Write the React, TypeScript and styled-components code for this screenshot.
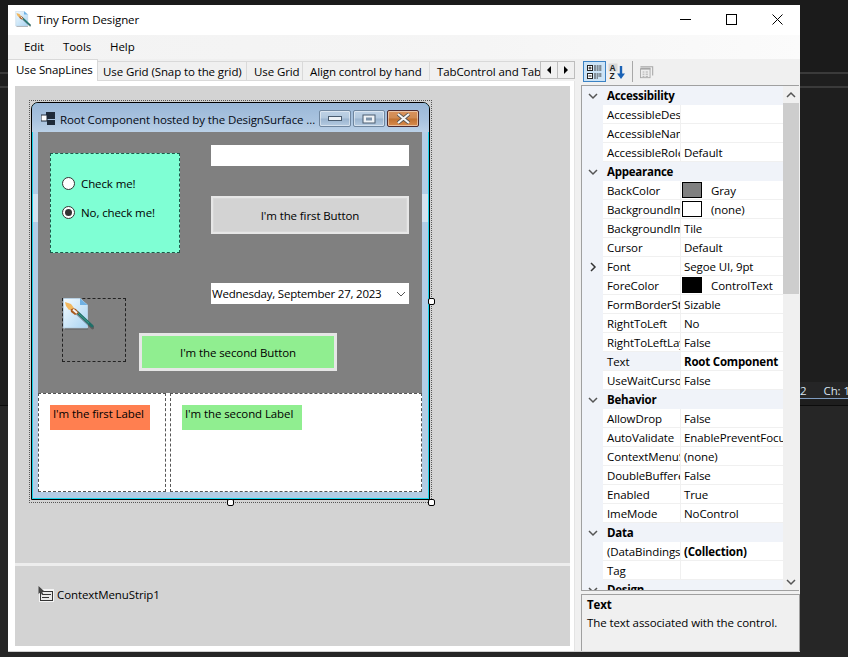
import React from "react";
import styled, { createGlobalStyle } from "styled-components";

const GlobalStyle = createGlobalStyle`
  html, body {
    margin: 0;
    padding: 0;
    background: #1e1e1e;
  }
  * {
    box-sizing: border-box;
  }
`;

const FONT = `"Open Sans", "Noto Sans", "Liberation Sans", sans-serif`;

const Shell = styled.div`
  position: relative;
  width: 848px;
  height: 657px;
  overflow: hidden;
  padding: 5px 0 0 8px;
  background: #1e1e1e;
  font-family: ${FONT};
  font-size: 11.5px;
  letter-spacing: -0.1px;
  color: #000;
`;

/* the editor behind the window, only its edges are visible */
const Backdrop = styled.div`
  position: absolute;
  inset: 0;
  display: flex;
  flex-direction: column;
`;

const BackdropTop = styled.div`
  height: 72px;
  background: #1b1b1b;
`;

const EditorLine = styled.div`
  height: 14px;
  border-top: 2px solid #3a3a3a;
`;

const EditorBody = styled.div`
  height: 296px;
  border-top: 2px solid #3a3a3a;
  background: #1e1e1e;
`;

const StatusRow = styled.div`
  height: 17px;
  margin-left: 800px;
  display: flex;
  gap: 17px;
  align-items: center;
  background: #252526;
  border-bottom: 1px solid #7f9cc0;
  color: #d7e3f0;
  white-space: nowrap;
`;

const EditorRest = styled.div`
  flex: 1;
  margin-top: 6px;
  background: #262626;
  border-top: 1px solid #0c0c0c;
`;

const Window = styled.div`
  position: relative;
  width: 792px;
  height: 647px;
  display: flex;
  flex-direction: column;
  background: #fff;
  border-bottom: 1px solid #d0d0d0;
`;

const TitleBar = styled.div`
  height: 30px;
  flex: none;
  display: flex;
  align-items: center;
  padding: 0 0 2px 7px;
  background: #fff;
`;

const TitleText = styled.span`
  margin-left: 6px;
  flex: 1;
`;

const WindowControls = styled.div`
  display: flex;
  align-items: center;
  margin-right: 17px;
  gap: 35px;
`;

const MenuBar = styled.div`
  height: 24px;
  flex: none;
  display: flex;
  align-items: center;
  gap: 19px;
  padding: 0 0 2px 16px;
  background: linear-gradient(90deg, #f3f3f3 0%, #f5f5f5 60%, #fbfbfb 100%);
`;

const Workspace = styled.div`
  flex: 1;
  min-height: 0;
  display: flex;
`;

const LeftPane = styled.div`
  width: 567px;
  flex: none;
  display: flex;
  flex-direction: column;
`;

const TabStrip = styled.div`
  height: 22px;
  flex: none;
  display: flex;
  background: #f0f0f0;
`;

const TabList = styled.div`
  width: 532px;
  flex: none;
  display: flex;
  align-items: flex-end;
  overflow: hidden;
`;

const Tab = styled.div<{ $w: number; $pad: number; $active?: boolean }>`
  width: ${(p) => p.$w}px;
  flex: none;
  height: ${(p) => (p.$active ? 22 : 20)}px;
  display: flex;
  align-items: center;
  padding-left: ${(p) => p.$pad}px;
  padding-bottom: ${(p) => (p.$active ? 3 : 0)}px;
  white-space: nowrap;
  overflow: hidden;
  background: ${(p) => (p.$active ? "#fff" : "#f0f0f0")};
  border: 1px solid #d9d9d9;
  border-left: none;
  border-bottom: ${(p) => (p.$active ? "none" : "1px solid #d9d9d9")};
`;

const TabScroller = styled.div`
  display: flex;
  height: 18px;
  margin-top: 2px;
`;

const TabScrollButton = styled.div`
  width: 18px;
  height: 18px;
  display: flex;
  align-items: center;
  justify-content: center;
  background: #f0f0f0;
  border: 1px solid #bdbdbd;
  margin-left: -1px;
  &:first-child {
    margin-left: 0;
  }
`;

const TabPage = styled.div`
  flex: 1;
  min-height: 0;
  display: flex;
  flex-direction: column;
  padding: 5px 4px 5px 7px;
  background: #fff;
  border-right: 1px solid #e4e4e4;
`;

const DesignCanvas = styled.div`
  height: 477px;
  flex: none;
  padding: 14px 0 0 14px;
  background: #d3d3d3;
`;

const TrayDivider = styled.div`
  height: 3px;
  flex: none;
  background: #ededed;
`;

const ComponentTray = styled.div`
  flex: 1;
  display: flex;
  align-items: flex-start;
  padding: 20px 0 0 23px;
  background: #d3d3d3;
`;

const TrayLabel = styled.span`
  margin: 1px 0 0 3px;
`;

const SelectionFrame = styled.div`
  position: relative;
  width: 403px;
  height: 403px;
  padding: 1px;
  border: 1px dotted #555;
`;

const Handle = styled.div<{ $x: number; $y: number }>`
  position: absolute;
  left: ${(p) => p.$x}px;
  top: ${(p) => p.$y}px;
  width: 7px;
  height: 7px;
  background: #fff;
  border: 1px solid #000;
  border-radius: 2px;
`;

const FormWindow = styled.div`
  width: 399px;
  height: 398px;
  display: flex;
  flex-direction: column;
  padding: 0 6px 7px 5px;
  border: 1px solid #000;
  border-radius: 7px 7px 0 0;
  box-shadow: inset 1px 0 0 #19d3ea, inset -1px 0 0 #19d3ea, inset 0 -1px 0 #19d3ea;
  background: linear-gradient(
    180deg,
    #b3cde6 0,
    #b3cde6 91px,
    #d4e3f1 91px,
    #d4e3f1 119px,
    #b3cde6 119px
  );
`;

const FormTitleBar = styled.div`
  height: 29px;
  flex: none;
  margin: 0 -6px 0 -5px;
  padding: 2px 10px 0 9px;
  display: flex;
  align-items: center;
  border-radius: 6px 6px 0 0;
  background: linear-gradient(180deg, #9ab7d7 0%, #a9c3df 60%, #bbd1e8 100%);
`;

const FormTitle = styled.span`
  margin-left: 5px;
  padding-top: 2px;
  flex: 1;
  white-space: nowrap;
  color: #050a14;
`;

const FormButtons = styled.div`
  display: flex;
  gap: 2px;
`;

const CaptionButton = styled.div<{ $close?: boolean }>`
  width: 32px;
  height: 17px;
  display: flex;
  align-items: center;
  justify-content: center;
  border: 1px solid ${(p) => (p.$close ? "#4c2a30" : "#6f869f")};
  border-radius: 2px;
  background: ${(p) =>
    p.$close
      ? "linear-gradient(180deg,#d9925c 0%,#d08a52 48%,#c06f2f 52%,#d98c4e 100%)"
      : "linear-gradient(180deg,#bfd2e6 0%,#b2c8de 48%,#9ab4cf 52%,#b5cbe1 100%)"};
  box-shadow: inset 0 0 0 1px rgba(255, 255, 255, 0.45);
`;

const FormClient = styled.div`
  flex: 1;
  min-height: 0;
  margin: 0 1px;
  display: flex;
  flex-direction: column;
`;

/* designer surface: controls sit at their own coordinates here */
const GraySurface = styled.div`
  position: relative;
  height: 261px;
  flex: none;
  background: #808080;
`;

const RadioPanel = styled.div`
  position: absolute;
  left: 12px;
  top: 21px;
  width: 130px;
  height: 100px;
  display: flex;
  flex-direction: column;
  gap: 10px;
  padding: 20px 0 0 11px;
  background: #7fffd4;
  border: 1px dashed #1c5a4a;
`;

const RadioRow = styled.div`
  display: flex;
  align-items: center;
  gap: 6px;
  height: 19px;
`;

const RadioCircle = styled.span<{ $checked?: boolean }>`
  width: 13px;
  height: 13px;
  flex: none;
  display: flex;
  align-items: center;
  justify-content: center;
  border-radius: 50%;
  border: 1px solid #333;
  background: #fff;
  &::after {
    content: "";
    display: ${(p) => (p.$checked ? "block" : "none")};
    width: 7px;
    height: 7px;
    border-radius: 50%;
    background: #333;
  }
`;

const NameInput = styled.div`
  position: absolute;
  left: 173px;
  top: 13px;
  width: 198px;
  height: 21px;
  background: #fff;
`;

const DesignButton = styled.div<{ $x: number; $y: number; $bg: string; $edge: string }>`
  position: absolute;
  left: ${(p) => p.$x}px;
  top: ${(p) => p.$y}px;
  width: 198px;
  height: 38px;
  display: flex;
  align-items: center;
  justify-content: center;
  background: ${(p) => p.$bg};
  border: 3px solid #e6e6e6;
  outline: 1px solid ${(p) => p.$edge};
  outline-offset: -3px;
`;

const DatePicker = styled.div`
  position: absolute;
  left: 173px;
  top: 151px;
  width: 198px;
  height: 21px;
  display: flex;
  align-items: center;
  justify-content: space-between;
  padding: 0 3px 0 1px;
  background: #fff;
  letter-spacing: -0.22px;
  white-space: nowrap;
`;

const PictureBox = styled.div`
  position: absolute;
  left: 24px;
  top: 166px;
  width: 64px;
  height: 64px;
  border: 1px dashed #222;
  & > svg {
    margin: -1px;
  }
`;

const BottomPanels = styled.div`
  flex: 1;
  display: flex;
  gap: 4px;
  background: #fff;
`;

const DockPanel = styled.div<{ $w: number; $indent: number }>`
  width: ${(p) => p.$w}px;
  flex: none;
  padding: 11px 0 0 ${(p) => p.$indent}px;
  background: #fff;
  border: 1px dashed #555;
`;

const DesignLabel = styled.div<{ $w: number; $bg: string }>`
  width: ${(p) => p.$w}px;
  height: 25px;
  padding-left: 3px;
  background: ${(p) => p.$bg};
  line-height: 17px;
  white-space: nowrap;
`;

const RightPane = styled.div`
  flex: 1;
  min-width: 0;
  display: flex;
  flex-direction: column;
  padding-left: 6px;
  background: #f0f0f0;
`;

const GridToolbar = styled.div`
  height: 26px;
  flex: none;
  display: flex;
  align-items: flex-start;
  padding: 2px 0 0 2px;
`;

const ToolButton = styled.div<{ $pressed?: boolean; $w: number }>`
  width: ${(p) => p.$w}px;
  height: 21px;
  display: flex;
  align-items: center;
  justify-content: center;
  background: ${(p) => (p.$pressed ? "#cce4f7" : "transparent")};
  border: 1px solid ${(p) => (p.$pressed ? "#3b82c4" : "transparent")};
`;

const ToolSeparator = styled.div`
  width: 1px;
  height: 21px;
  margin: 0 6px 0 4px;
  background: #a8a8a8;
`;

const Grid = styled.div`
  height: 506px;
  flex: none;
  display: flex;
  margin-right: 1px;
  background: #fff;
  border: 1px solid #a0a0a0;
`;

const GridList = styled.div`
  width: 201px;
  flex: none;
  overflow: hidden;
`;

const CategoryRow = styled.div`
  height: 19px;
  display: grid;
  grid-template-columns: 21px 1fr;
  align-items: center;
  background: #f0f3f9;
`;

const CategoryTitle = styled.span`
  padding-left: 4px;
  font-weight: 700;
  letter-spacing: -0.25px;
`;

const GridMargin = styled.div`
  display: flex;
  align-items: center;
  justify-content: center;
  height: 100%;
`;

const PropertyRow = styled.div`
  height: 19px;
  display: grid;
  grid-template-columns: 21px 77px 1fr;
  background: #fff;
`;

const RowMargin = styled(GridMargin)`
  background: #f0f3f9;
`;

const PropertyName = styled.div<{ $selected?: boolean }>`
  display: flex;
  align-items: center;
  height: 19px;
  overflow: hidden;
  white-space: nowrap;
  padding-left: 4px;
  border-bottom: 1px solid #f0f0f0;
  background: ${(p) => (p.$selected ? "#f0f3f9" : "#fff")};
`;

const PropertyValue = styled.div<{ $bold?: boolean }>`
  display: flex;
  align-items: center;
  overflow: hidden;
  white-space: nowrap;
  height: 19px;
  padding-left: 3px;
  font-weight: ${(p) => (p.$bold ? 700 : 400)};
  letter-spacing: ${(p) => (p.$bold ? "-0.2px" : "-0.1px")};
  border-left: 1px solid #f0f0f0;
  border-bottom: 1px solid #f0f0f0;
`;

const Swatch = styled.span<{ $color: string }>`
  width: 20px;
  height: 16px;
  flex: none;
  margin: 0 9px 0 -2px;
  background: ${(p) => p.$color};
  border: 1px solid #000;
`;

const ScrollBar = styled.div`
  width: 16px;
  flex: none;
  display: flex;
  flex-direction: column;
  background: #f0f0f0;
`;

const ScrollArrow = styled.div`
  height: 17px;
  flex: none;
  display: flex;
  align-items: center;
  justify-content: center;
`;

const ScrollThumb = styled.div`
  height: 191px;
  flex: none;
  background: #cdcdcd;
`;

const ScrollTrack = styled.div`
  flex: 1;
`;

const HelpPanel = styled.div`
  height: 57px;
  flex: none;
  margin-top: 3px;
  padding: 1px 0 0 5px;
  background: #f0f0f0;
  border: 1px solid #a0a0a0;
  border-bottom: none;
  line-height: 18px;
`;

const HelpTitle = styled.div`
  font-weight: 700;
`;

type PropertyItem = {
  name: string;
  value?: string;
  swatch?: string;
  bold?: boolean;
  expandable?: boolean;
  selected?: boolean;
};

type PropertyGroup = {
  title: string;
  items: PropertyItem[];
};

const groups: PropertyGroup[] = [
  {
    title: "Accessibility",
    items: [
      { name: "AccessibleDescription" },
      { name: "AccessibleName" },
      { name: "AccessibleRole", value: "Default" },
    ],
  },
  {
    title: "Appearance",
    items: [
      { name: "BackColor", value: "Gray", swatch: "#808080" },
      { name: "BackgroundImage", value: "(none)", swatch: "#fff" },
      { name: "BackgroundImageLayout", value: "Tile" },
      { name: "Cursor", value: "Default" },
      { name: "Font", value: "Segoe UI, 9pt", expandable: true },
      { name: "ForeColor", value: "ControlText", swatch: "#000" },
      { name: "FormBorderStyle", value: "Sizable" },
      { name: "RightToLeft", value: "No" },
      { name: "RightToLeftLayout", value: "False" },
      { name: "Text", value: "Root Component", bold: true, selected: true },
      { name: "UseWaitCursor", value: "False" },
    ],
  },
  {
    title: "Behavior",
    items: [
      { name: "AllowDrop", value: "False" },
      { name: "AutoValidate", value: "EnablePreventFocusChange" },
      { name: "ContextMenuStrip", value: "(none)" },
      { name: "DoubleBuffered", value: "False" },
      { name: "Enabled", value: "True" },
      { name: "ImeMode", value: "NoControl" },
    ],
  },
  {
    title: "Data",
    items: [
      { name: "(DataBindings)", value: "(Collection)", bold: true },
      { name: "Tag" },
    ],
  },
  { title: "Design", items: [] },
];

const BrushIcon = ({ size }: { size: number }) => (
  <svg width={size} height={size} viewBox="0 0 32 32" style={{ flex: "none", display: "block" }}>
    <defs>
      <linearGradient id="pageFill" x1="0" y1="0" x2="1" y2="1">
        <stop offset="0" stopColor="#f4fbff" />
        <stop offset="1" stopColor="#a9d4f2" />
      </linearGradient>
    </defs>
    <path d="M1.5 0.5H18L25.5 7V30H1.5Z" fill="url(#pageFill)" stroke="#b7cfe2" strokeWidth="1" />
    <path d="M18 0.5V7H25.5Z" fill="#6fb1e4" />
    <path d="M3 31H26" stroke="#555" strokeOpacity="0.5" strokeWidth="1.5" />
    <path d="M16 16L30.5 29.5" stroke="#333" strokeOpacity="0.45" strokeWidth="3.6" strokeLinecap="round" />
    <path d="M15 14L30 28" stroke="#1f6f68" strokeWidth="3" strokeLinecap="round" />
    <path d="M16 15L27 25.2" stroke="#3fa08c" strokeWidth="1" />
    <path d="M8 9L14 11L17 15L13 17L9 14Z" fill="#a9591c" />
    <path d="M3 4L9 6L12 10L7 12L4 8Z" fill="#f2b75e" />
    <path d="M11 11.5L15 15" stroke="#f4f4f4" strokeWidth="2" />
  </svg>
);

const Chevron = ({ dir, color = "#555", weight = 1.5 }: { dir: "down" | "right" | "up"; color?: string; weight?: number }) => {
  const d = dir === "down" ? "M1 3L5 7L9 3" : dir === "up" ? "M1 7L5 3L9 7" : "M3 1L7 5L3 9";
  return (
    <svg width="10" height="10" viewBox="0 0 10 10">
      <path d={d} fill="none" stroke={color} strokeWidth={weight} />
    </svg>
  );
};

const Triangle = ({ left }: { left?: boolean }) => (
  <svg width="6" height="8" viewBox="0 0 6 8">
    <path d={left ? "M5 0V8L1 4Z" : "M1 0V8L5 4Z"} fill="#000" />
  </svg>
);

const CategorizedIcon = () => (
  <svg width="16" height="16" viewBox="0 0 16 16">
    <rect x="0.5" y="1.5" width="5" height="5" fill="#fff" stroke="#222" />
    <path d="M1.5 4H4.5M3 2.5V5.5" stroke="#222" />
    <rect x="0.5" y="9.5" width="5" height="5" fill="#fff" stroke="#222" />
    <path d="M1.5 12H4.5" stroke="#222" />
    <path d="M7 2H15M7 4H15M7 6H15M7 10H15M7 12H15M7 14H11" stroke="#333" strokeDasharray="2 0.6" />
  </svg>
);

const AlphaIcon = () => (
  <svg width="18" height="18" viewBox="0 0 18 18">
    <rect x="0.5" y="0.5" width="9" height="8" fill="#d8d8d8" />
    <text x="1.6" y="7.5" fontSize="8.5" fontWeight="700" fontFamily="Liberation Sans" fill="#222">A</text>
    <text x="1.6" y="16" fontSize="8.5" fontWeight="700" fontFamily="Liberation Sans" fill="#222">Z</text>
    <path d="M13 3V13" stroke="#1a62b5" strokeWidth="2.4" />
    <path d="M9 10.5H17L13 16Z" fill="#1a62b5" />
  </svg>
);

const PagesIcon = () => (
  <svg width="16" height="14" viewBox="0 0 16 14">
    <rect x="0.5" y="3.5" width="11" height="10" fill="#ededed" stroke="#a6a6a6" />
    <path d="M0.5 1H14.5V11" fill="none" stroke="#a6a6a6" strokeWidth="1.2" />
    <path d="M0.5 3H12" stroke="#a6a6a6" strokeWidth="2" />
    <path d="M3 7H5M6.5 7H9M3 9.5H5M6.5 9.5H9M3 12H5M6.5 12H9" stroke="#a6a6a6" />
  </svg>
);

const TrayIcon = () => (
  <svg width="16" height="16" viewBox="0 0 16 16" style={{ flex: "none" }}>
    <rect x="1" y="3" width="15" height="13" fill="#f4f4f4" />
    <rect x="2.5" y="5.5" width="12" height="9" fill="#e8e8e8" stroke="#333" />
    <path d="M4 8.5H13M4 11.5H11" stroke="#333" />
    <path d="M0.5 0V8L2.5 6.2L4 9L5.4 8.2L4 5.6H6.5Z" fill="#444" />
  </svg>
);

const FormGlyph = () => (
  <svg width="14" height="13" viewBox="0 0 14 13" style={{ flex: "none" }}>
    <rect x="5" y="0" width="9" height="7" fill="#1f2b3a" />
    <rect x="0" y="3" width="6" height="6" fill="#fff" stroke="#1f2b3a" />
    <rect x="6" y="8" width="8" height="5" fill="#1f2b3a" />
  </svg>
);

const App = () => {
  return (
    <Shell>
      <GlobalStyle />
      <Backdrop>
        <BackdropTop />
        <EditorLine />
        <EditorBody />
        <StatusRow>
          <span>2</span>
          <span>Ch: 1</span>
        </StatusRow>
        <EditorRest />
      </Backdrop>

      <Window>
        <TitleBar>
          <BrushIcon size={16} />
          <TitleText>Tiny Form Designer</TitleText>
          <WindowControls>
            <svg width="11" height="11" viewBox="0 0 11 11">
              <path d="M0 5.5H11" stroke="#000" />
            </svg>
            <svg width="11" height="11" viewBox="0 0 11 11">
              <rect x="0.5" y="0.5" width="10" height="10" fill="none" stroke="#000" />
            </svg>
            <svg width="11" height="11" viewBox="0 0 11 11">
              <path d="M0.5 0.5L10.5 10.5M10.5 0.5L0.5 10.5" stroke="#000" />
            </svg>
          </WindowControls>
        </TitleBar>

        <MenuBar>
          <span>Edit</span>
          <span>Tools</span>
          <span>Help</span>
        </MenuBar>

        <Workspace>
          <LeftPane>
            <TabStrip>
              <TabList>
                <Tab $w={90} $pad={8} $active>Use SnapLines</Tab>
                <Tab $w={149} $pad={5}>Use Grid (Snap to the grid)</Tab>
                <Tab $w={56} $pad={7}>Use Grid</Tab>
                <Tab $w={127} $pad={7}>Align control by hand</Tab>
                <Tab $w={130} $pad={7}>TabControl and TabPage</Tab>
              </TabList>
              <TabScroller>
                <TabScrollButton>
                  <Triangle left />
                </TabScrollButton>
                <TabScrollButton>
                  <Triangle />
                </TabScrollButton>
              </TabScroller>
            </TabStrip>

            <TabPage>
              <DesignCanvas>
                <SelectionFrame>
                  <FormWindow>
                    <FormTitleBar>
                      <FormGlyph />
                      <FormTitle>Root Component hosted by the DesignSurface ...</FormTitle>
                      <FormButtons>
                        <CaptionButton>
                          <svg width="14" height="6" viewBox="0 0 14 6">
                            <rect x="0.5" y="0.5" width="13" height="4" fill="#eef2f6" stroke="#4a5c70" />
                          </svg>
                        </CaptionButton>
                        <CaptionButton>
                          <svg width="14" height="10" viewBox="0 0 14 10">
                            <rect x="1" y="1" width="12" height="8" fill="#eef2f6" stroke="#4a5c70" />
                            <rect x="4" y="3.5" width="6" height="3" fill="#7d93aa" />
                          </svg>
                        </CaptionButton>
                        <CaptionButton $close>
                          <svg width="15" height="11" viewBox="0 0 15 11">
                            <path d="M2 1L13 10M13 1L2 10" stroke="#4f4f4f" strokeWidth="3.6" />
                            <path d="M2 1L13 10M13 1L2 10" stroke="#f4f4f4" strokeWidth="2.2" />
                          </svg>
                        </CaptionButton>
                      </FormButtons>
                    </FormTitleBar>

                    <FormClient>
                      <GraySurface>
                        <RadioPanel>
                          <RadioRow>
                            <RadioCircle />
                            <span>Check me!</span>
                          </RadioRow>
                          <RadioRow>
                            <RadioCircle $checked />
                            <span>No, check me!</span>
                          </RadioRow>
                        </RadioPanel>
                        <NameInput />
                        <DesignButton $x={173} $y={64} $bg="#d3d3d3" $edge="#d8d8d8">
                          I'm the first Button
                        </DesignButton>
                        <DatePicker>
                          <span>Wednesday, September 27, 2023</span>
                          <Chevron dir="down" color="#555" weight={1} />
                        </DatePicker>
                        <PictureBox>
                          <BrushIcon size={32} />
                        </PictureBox>
                        <DesignButton $x={101} $y={201} $bg="#90ee90" $edge="#e6e6e6">
                          I'm the second Button
                        </DesignButton>
                      </GraySurface>
                      <BottomPanels>
                        <DockPanel $w={128} $indent={11}>
                          <DesignLabel $w={100} $bg="#ff7f50">I'm the first Label</DesignLabel>
                        </DockPanel>
                        <DockPanel $w={252} $indent={11}>
                          <DesignLabel $w={120} $bg="#90ee90">I'm the second Label</DesignLabel>
                        </DockPanel>
                      </BottomPanels>
                    </FormClient>
                  </FormWindow>
                  <Handle $x={398} $y={197} />
                  <Handle $x={197} $y={398} />
                  <Handle $x={398} $y={398} />
                </SelectionFrame>
              </DesignCanvas>
              <TrayDivider />
              <ComponentTray>
                <TrayIcon />
                <TrayLabel>ContextMenuStrip1</TrayLabel>
              </ComponentTray>
            </TabPage>
          </LeftPane>

          <RightPane>
            <GridToolbar>
              <ToolButton $pressed $w={23}>
                <CategorizedIcon />
              </ToolButton>
              <ToolButton $w={22}>
                <AlphaIcon />
              </ToolButton>
              <ToolSeparator />
              <ToolButton $w={16}>
                <PagesIcon />
              </ToolButton>
            </GridToolbar>

            <Grid>
              <GridList>
                {groups.map((group) => (
                  <React.Fragment key={group.title}>
                    <CategoryRow>
                      <GridMargin>
                        <Chevron dir="down" />
                      </GridMargin>
                      <CategoryTitle>{group.title}</CategoryTitle>
                    </CategoryRow>
                    {group.items.map((item) => (
                      <PropertyRow key={item.name}>
                        <RowMargin>
                          {item.expandable && <Chevron dir="right" color="#333" />}
                        </RowMargin>
                        <PropertyName $selected={item.selected}>{item.name}</PropertyName>
                        <PropertyValue $bold={item.bold}>
                          {item.swatch && <Swatch $color={item.swatch} />}
                          {item.value}
                        </PropertyValue>
                      </PropertyRow>
                    ))}
                  </React.Fragment>
                ))}
              </GridList>
              <ScrollBar>
                <ScrollArrow>
                  <Chevron dir="up" />
                </ScrollArrow>
                <ScrollThumb />
                <ScrollTrack />
                <ScrollArrow>
                  <Chevron dir="down" />
                </ScrollArrow>
              </ScrollBar>
            </Grid>

            <HelpPanel>
              <HelpTitle>Text</HelpTitle>
              <div>The text associated with the control.</div>
            </HelpPanel>
          </RightPane>
        </Workspace>
      </Window>
    </Shell>
  );
};

export default App;
